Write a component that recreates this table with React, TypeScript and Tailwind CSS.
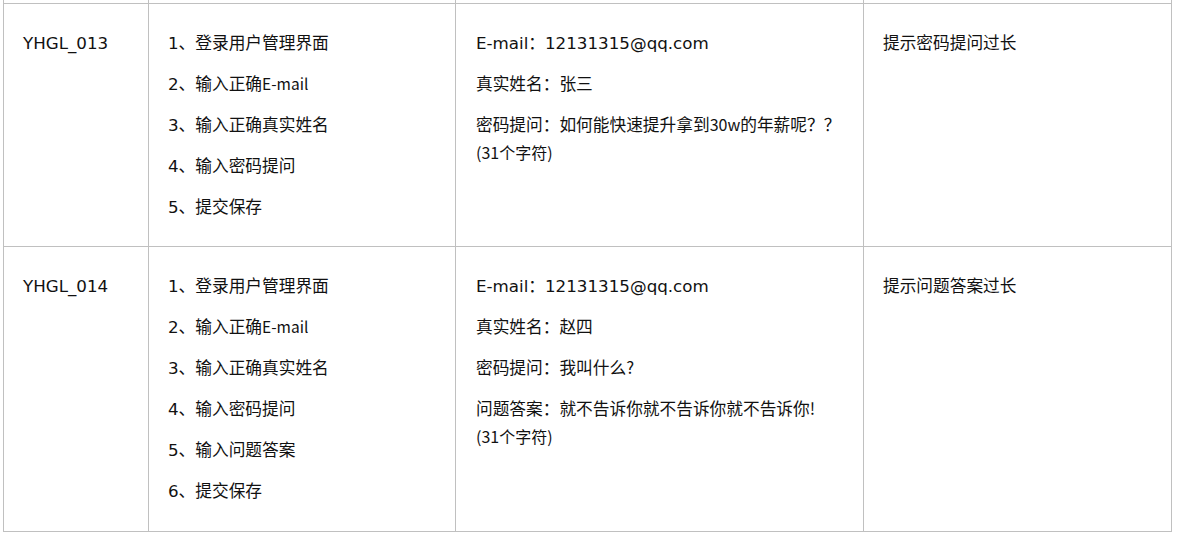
import React from "react";

const cjk = { fontFamily: '"Noto Sans CJK SC", sans-serif' } as const;

function Cell({ children, last = false, pl = "pl-[19px]" }: { children?: React.ReactNode; last?: boolean; pl?: string }) {
  return (
    <div className={`border-l border-[#c0c0c0] ${last ? "border-r" : ""} ${pl} pr-5 pt-[26px] flex flex-col gap-[14px]`}>
      {children}
    </div>
  );
}

function P({ children }: { children: React.ReactNode }) {
  return <p className="leading-[27px] whitespace-nowrap">{children}</p>;
}

const Mail = () => <span style={cjk} className="text-[15.5px] leading-none">E-mail</span>;

export default function App() {
  const cols = "grid grid-cols-[145px_307px_408px_309px]";
  return (
    <div
      className="min-h-[538px] w-[1181px] bg-white text-[16.7px] text-[#111] overflow-hidden"
      style={{ fontFamily: '"DejaVu Sans", "Noto Sans CJK SC", sans-serif' }}
    >
      <div className="ml-[3px] w-[1169px]">
        <div className={`${cols} h-[3px]`}>
          <div className="border-l border-[#c0c0c0]" />
          <div className="border-l border-[#c0c0c0]" />
          <div className="border-l border-[#c0c0c0]" />
          <div className="border-l border-r border-[#c0c0c0]" />
        </div>
        <div className={`${cols} h-[243px] border-t border-[#c0c0c0]`}>
          <Cell>
            <P>YHGL_013</P>
          </Cell>
          <Cell>
            <P>1、登录用户管理界面</P>
            <P>2、输入正确<Mail /></P>
            <P>3、输入正确真实姓名</P>
            <P>4、输入密码提问</P>
            <P>5、提交保存</P>
          </Cell>
          <Cell pl="pl-5">
            <P>E-mail：12131315@qq.com</P>
            <P>真实姓名：张三</P>
            <div>
              <P>
                密码提问：如何能快速提升拿到<span style={cjk} className="text-[16px] leading-none">30w</span>的年薪呢？？
              </P>
              <p style={cjk} className="text-[16px] leading-[27px] whitespace-nowrap">(31个字符)</p>
            </div>
          </Cell>
          <Cell last>
            <P>提示密码提问过长</P>
          </Cell>
        </div>
        <div className={`${cols} h-[286px] border-t border-b border-[#c0c0c0]`}>
          <Cell>
            <P>YHGL_014</P>
          </Cell>
          <Cell>
            <P>1、登录用户管理界面</P>
            <P>2、输入正确<Mail /></P>
            <P>3、输入正确真实姓名</P>
            <P>4、输入密码提问</P>
            <P>5、输入问题答案</P>
            <P>6、提交保存</P>
          </Cell>
          <Cell pl="pl-5">
            <P>E-mail：12131315@qq.com</P>
            <P>真实姓名：赵四</P>
            <P>密码提问：我叫什么<span style={cjk} className="leading-none">?</span></P>
            <div>
              <P>
                问题答案：就不告诉你就不告诉你就不告诉你<span style={cjk} className="leading-none">!</span>
              </P>
              <p style={cjk} className="text-[16px] leading-[27px] whitespace-nowrap">(31个字符)</p>
            </div>
          </Cell>
          <Cell last>
            <P>提示问题答案过长</P>
          </Cell>
        </div>
      </div>
    </div>
  );
}
